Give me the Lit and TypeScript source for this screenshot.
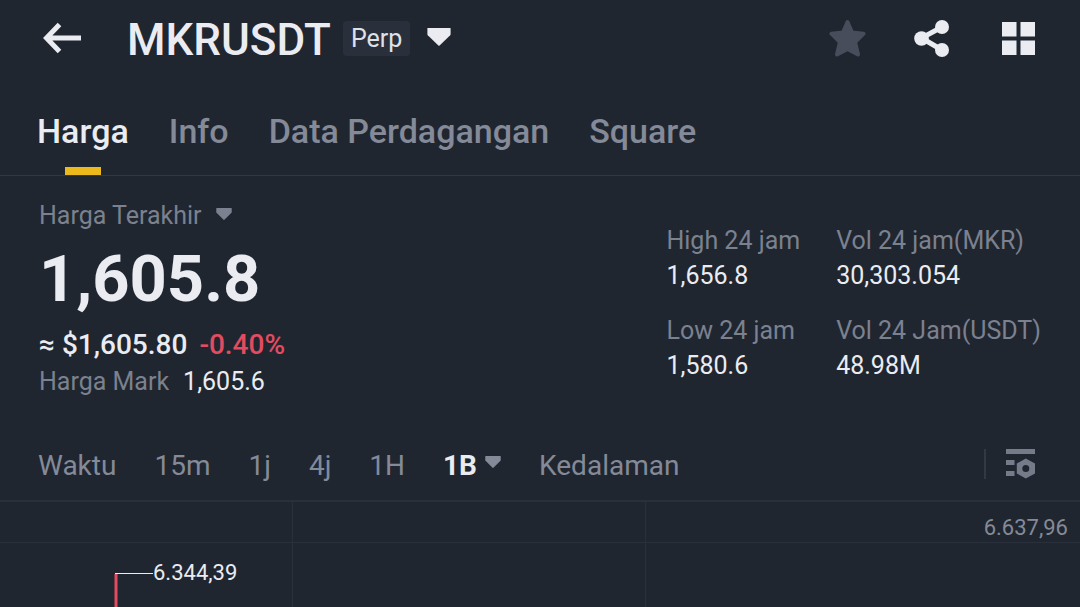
import { LitElement, html, css, svg } from "lit";
import { customElement, property, state } from "lit/decorators.js";

interface Stat {
  label: string;
  value: string;
}

const TABS = ["Harga", "Info", "Data Perdagangan", "Square"];
const STATS: Stat[] = [
  { label: "High 24 jam", value: "1,656.8" },
  { label: "Vol 24 jam(MKR)", value: "30,303.054" },
  { label: "Low 24 jam", value: "1,580.6" },
  { label: "Vol 24 Jam(USDT)", value: "48.98M" },
];
const INTERVALS = ["Waktu", "15m", "1j", "4j", "1H"];
const GRID_COLUMNS = [292, 645];

const buttonReset = css`
  button,
  select {
    appearance: none;
    margin: 0;
    padding: 0;
    border: 0;
    background: none;
    color: inherit;
    font: inherit;
    cursor: pointer;
  }
  svg {
    display: block;
  }
`;

@customElement("caret-down")
class CaretDown extends LitElement {
  static styles = css`
    :host {
      display: block;
      flex: none;
      width: 16px;
      padding-bottom: 4px;
    }
    svg {
      display: block;
      width: 100%;
    }
  `;

  render() {
    return html`<svg viewBox="0 0 24 18" fill="currentColor" aria-hidden="true">
      <path d="M1 0h22q.6 0 .6.6v5.600q0 .6-.4 1L12.600 17.600q-.6.5-1.200 0L.8 7.200q-.4-.4-.4-1V.6Q.4 0 1 0z" />
    </svg>`;
  }
}

@customElement("pair-header")
class PairHeader extends LitElement {
  @state() favorite = false;

  static styles = [
    buttonReset,
    css`
      .bar {
        display: flex;
        align-items: center;
        height: 76px;
        padding: 0 44px 0 42px;
        color: #eaecf2;
      }
      .pair {
        display: flex;
        align-items: center;
        margin-left: 45px;
      }
      .symbol {
        margin: 0;
        padding-top: 4px;
        font-size: 44px;
        line-height: 52px;
        font-weight: 500;
      }
      .badge {
        margin-left: 12px;
        padding: 0 8px;
        border-radius: 4px;
        background: #2a303b;
        color: #dfe1e8;
        font-size: 25px;
        line-height: 35px;
      }
      .switch {
        margin-left: 17px;
      }
      .switch caret-down {
        width: 24px;
        padding-bottom: 2px;
      }
      .actions {
        display: flex;
        align-items: center;
        gap: 47px;
        margin-left: auto;
      }
      .star {
        color: #474d5b;
      }
    `,
  ];

  render() {
    return html`<header class="bar">
      <button aria-label="Kembali">
        <svg width="40" height="32" viewBox="0 0 40 32" fill="none" stroke="currentColor" stroke-width="5">
          <path d="M39 16H5M17.500 2.500L4.500 16l13 13.500" />
        </svg>
      </button>
      <div class="pair">
        <h1 class="symbol">MKRUSDT</h1>
        <span class="badge">Perp</span>
        <button class="switch" aria-label="Pilih pasangan"><caret-down></caret-down></button>
      </div>
      <div class="actions">
        <button
          class="star"
          aria-label="Favorit"
          aria-pressed=${this.favorite}
          @click=${() => (this.favorite = !this.favorite)}
        >
          <svg width="38" height="38" viewBox="0 0 38 38" fill="currentColor" stroke="currentColor" stroke-width="4" stroke-linejoin="round">
            <path d="M19.500 3l4.500 10.600 11.500 1.100-8.400 8.500L30 35.500 19.500 30 9 35.500l2.900-12.300L3.500 14.700l11.500-1.100z" />
          </svg>
        </button>
        <button aria-label="Bagikan">
          <svg width="38" height="38" viewBox="0 0 38 38" fill="currentColor">
            <path d="M29 8L8.500 19L29 31" fill="none" stroke="currentColor" stroke-width="5" />
            <circle cx="29" cy="8" r="7" />
            <circle cx="8.500" cy="19.500" r="7.300" />
            <circle cx="29" cy="31" r="7" />
          </svg>
        </button>
        <button aria-label="Menu">
          <svg width="38" height="38" viewBox="0 0 38 38" fill="currentColor">
            <path d="M4 3h14.500v14.500H4zM22.500 3H37v14.500H22.500zM4 21.500h14.500V36H4zM22.500 21.500H37V36H22.500z" />
          </svg>
        </button>
      </div>
    </header>`;
  }
}

@customElement("section-tabs")
class SectionTabs extends LitElement {
  @state() active = 0;

  static styles = [
    buttonReset,
    css`
      .tabs {
        display: flex;
        gap: 40px;
        height: 99px;
        padding: 0 37px;
        border-bottom: 1px solid #333944;
      }
      .tab {
        display: flex;
        flex-direction: column;
        align-items: center;
        justify-content: flex-end;
        gap: 16px;
        color: #848a98;
        font-size: 34px;
        line-height: 40px;
        font-weight: 500;
      }
      .tab::after {
        content: "";
        width: 36px;
        height: 8px;
      }
      .tab[aria-selected="true"] {
        color: #eaecf2;
      }
      .tab[aria-selected="true"]::after {
        background: #ecb91c;
      }
    `,
  ];

  render() {
    return html`<div class="tabs" role="tablist">
      ${TABS.map(
        (tab, i) => html`<button
          class="tab"
          role="tab"
          aria-selected=${i === this.active ? "true" : "false"}
          @click=${() => (this.active = i)}
        >
          ${tab}
        </button>`
      )}
    </div>`;
  }
}

@customElement("price-summary")
class PriceSummary extends LitElement {
  @property({ attribute: false }) stats: Stat[] = STATS;

  static styles = [
    buttonReset,
    css`
      .summary {
        display: flex;
        justify-content: space-between;
        align-items: flex-start;
        padding: 23px 39px 0 39px;
        color: #eaecf2;
        font-size: 25px;
        line-height: 34px;
      }
      .muted {
        color: #7b818f;
      }
      .kind {
        display: flex;
        align-items: center;
        gap: 13px;
      }
      .last {
        margin: 4px 0 5px;
        font-size: 65px;
        line-height: 84px;
        font-weight: 700;
      }
      .line {
        display: flex;
        gap: 12px;
        font-size: 28px;
        line-height: 38px;
        font-weight: 500;
      }
      .down {
        color: #e34c60;
      }
      .mark {
        display: flex;
        gap: 14px;
        line-height: 36px;
      }
      .stats {
        display: grid;
        grid-template-columns: auto auto;
        gap: 20px 36px;
        margin: 24px 0 0;
      }
      .stats dt,
      .stats dd {
        margin: 0;
        line-height: 35px;
      }
    `,
  ];

  render() {
    return html`<section class="summary">
      <div>
        <label class="kind muted">
          <select aria-label="Jenis harga">
            <option>Harga Terakhir</option>
          </select>
          <caret-down></caret-down>
        </label>
        <div class="last">1,605.8</div>
        <div class="line"><span>≈ $1,605.80</span><span class="down">-0.40%</span></div>
        <div class="mark"><span class="muted">Harga Mark</span><span>1,605.6</span></div>
      </div>
      <dl class="stats">
        ${this.stats.map(
          (s) => html`<div>
            <dt class="muted">${s.label}</dt>
            <dd>${s.value}</dd>
          </div>`
        )}
      </dl>
    </section>`;
  }
}

@customElement("interval-bar")
class IntervalBar extends LitElement {
  static styles = [
    buttonReset,
    css`
      .bar {
        display: flex;
        align-items: center;
        gap: 38px;
        height: 72px;
        padding: 0 44px 0 38px;
        border-bottom: 2px solid #2a303b;
        color: #848a98;
        font-size: 28px;
        line-height: 36px;
      }
      .choice,
      select {
        padding-top: 4px;
      }
      .more {
        display: flex;
        align-items: center;
        gap: 8px;
      }
      .more select {
        color: #eaecf2;
        font-weight: 700;
      }
      .settings {
        display: flex;
        align-items: center;
        margin-left: auto;
        padding-left: 20px;
        border-left: 2px solid #333944;
      }
    `,
  ];

  render() {
    return html`<nav class="bar">
      ${INTERVALS.map((label) => html`<button class="choice">${label}</button>`)}
      <label class="more">
        <select aria-label="Interval">
          <option>1B</option>
        </select>
        <caret-down></caret-down>
      </label>
      <button class="choice">Kedalaman</button>
      <button class="settings" aria-label="Pengaturan grafik">
        <svg width="30" height="30" viewBox="0 0 30 30" fill="#757b89">
          <path d="M0 0h29v5H0zM0 11h8.500v5H0zM0 22h8.500v5H0z" />
          <path fill-rule="evenodd" d="M19.800 9.500l9.200 5v10l-9.200 5-9-5v-10zM19.800 16a3.500 3.500 0 1 0 0 7 3.500 3.500 0 0 0 0-7z" />
        </svg>
      </button>
    </nav>`;
  }
}

@customElement("price-chart")
class PriceChart extends LitElement {
  static styles = css`
    :host {
      display: flex;
      flex: 1;
      min-height: 100px;
    }
    .plot {
      display: block;
      flex: 1;
      min-width: 0;
      contain: size;
      font-size: 22px;
    }
    .grid {
      stroke: #2a303b;
    }
    .axis {
      fill: #848a98;
      text-anchor: end;
    }
    .peak {
      fill: #eaecf2;
    }
    .leader {
      stroke: #eaecf2;
    }
    .wick {
      stroke: #e34c60;
      stroke-width: 3;
    }
    .right {
      overflow: visible;
    }
  `;

  render() {
    return html`<svg class="plot" role="img" aria-label="Grafik harga">
      ${GRID_COLUMNS.map(
        (x) => svg`<line class="grid" x1=${x + 0.5} x2=${x + 0.5} y1="0" y2="100%" />`
      )}
      <line class="grid" x1="0" x2="100%" y1="40.500" y2="40.500" />
      <svg class="right" x="100%" width="1" height="1"><text class="axis" x="-12" y="33">6.637,96</text></svg>
      <line class="wick" x1="116" x2="116" y1="72" y2="100%" />
      <line class="leader" x1="115" x2="153" y1="71.500" y2="71.500" />
      <text class="peak" x="153" y="78">6.344,39</text>
    </svg>`;
  }
}

@customElement("app-root")
class AppRoot extends LitElement {
  static styles = css`
    :host {
      display: flex;
      flex-direction: column;
      min-height: 100vh;
      background: #202630;
      font-family: Roboto, "Liberation Sans", sans-serif;
    }
    interval-bar {
      margin-top: 28px;
    }
  `;

  render() {
    return html`
      <pair-header></pair-header>
      <section-tabs></section-tabs>
      <price-summary></price-summary>
      <interval-bar></interval-bar>
      <price-chart></price-chart>
    `;
  }
}
